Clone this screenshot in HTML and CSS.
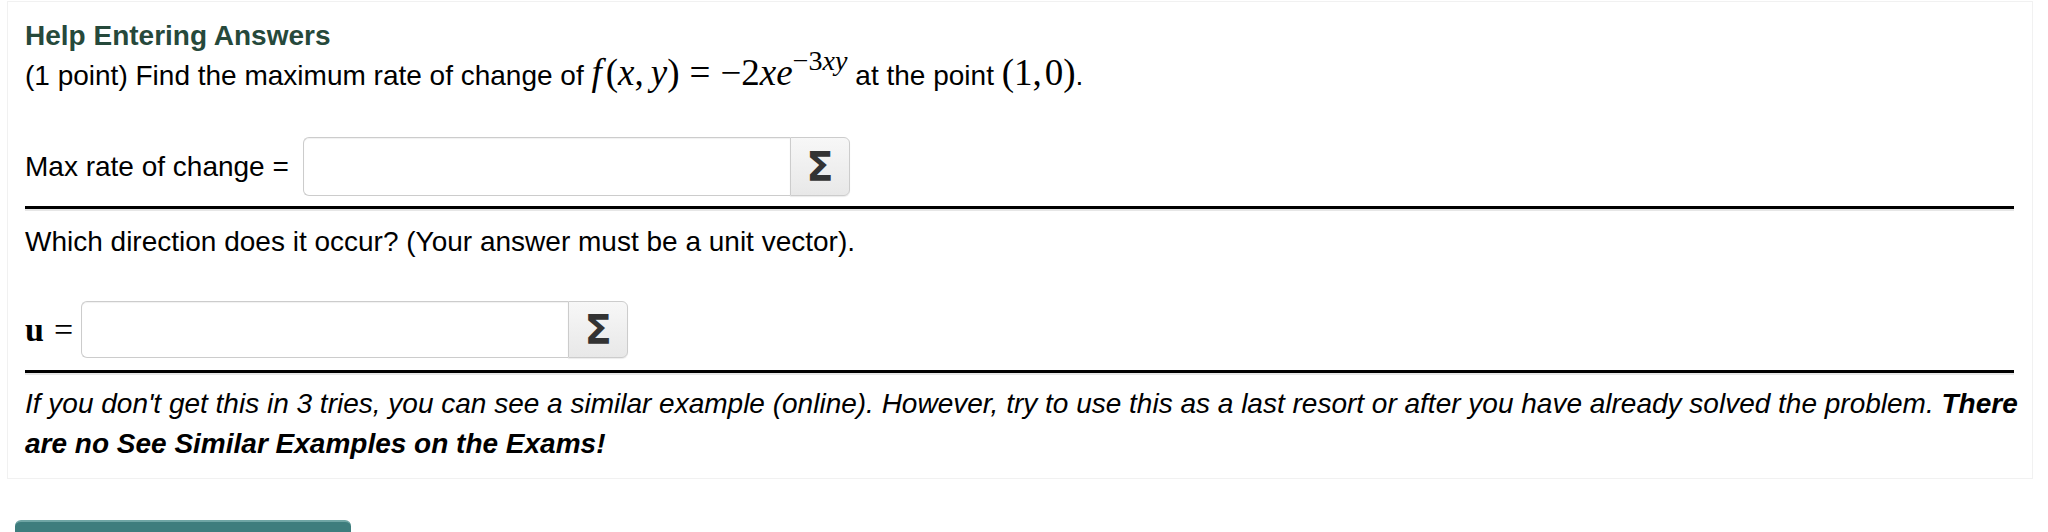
FILE: index.html
```html
<!DOCTYPE html>
<html>
<head>
<meta charset="utf-8">
<link rel="stylesheet" href="styles.css">
</head>
<body>
<div class="well">
  <div class="help">Help Entering Answers</div>
  <p class="problem">(1 point) Find the maximum rate of change of <span class="math"><i>f</i><span class="kern"></span>(<i>x</i>,<span class="thin"></span><i>y</i>)<span class="rel">=</span>−2<i>x</i><i>e</i><sup>−3<i>x</i><i>y</i></sup></span> at the point <span class="math">(1,<span class="tiny"></span>0)</span>.</p>

  <div class="answer-row">
    <span class="label label-wide">Max rate of change =</span>
    <span class="input-group">
      <span class="field"></span>
      <span class="sigma">Σ</span>
    </span>
  </div>
  <hr class="rule">

  <p class="line">Which direction does it occur? (Your answer must be a unit vector).</p>

  <div class="answer-row row-u">
    <span class="label label-u"><b class="vec">u</b><span class="eq">=</span></span>
    <span class="input-group">
      <span class="field"></span>
      <span class="sigma">Σ</span>
    </span>
  </div>
  <hr class="rule rule-u">

  <p class="note"><i>If you don't get this in 3 tries, you can see a similar example (online). However, try to use this as a last resort or after you have already solved the problem. <b>There are no See Similar Examples on the Exams!</b></i></p>
</div>
<div class="submit-bar"></div>
</body>
</html>
```

FILE: styles.css
```css
html, body {
  margin: 0;
  padding: 0;
  background: #fff;
}
body {
  font-family: "Liberation Sans", Helvetica, Arial, sans-serif;
  font-size: 28px;
  line-height: 40px;
  color: #000;
  padding-top: 1px;
}
.well {
  box-sizing: border-box;
  margin-left: 7px;
  width: 2026px;
  border: 1px solid #f1f1f1;
  padding: 14px 18px 14px 17px;
}
.help {
  font-weight: bold;
  color: #26493b;
  line-height: 40px;
}
.problem {
  margin: 0;
  line-height: 40px;
}
.math {
  font-family: "Liberation Serif", "Times New Roman", serif;
  font-size: 37px;
  line-height: 0;
}
.math i {
  font-style: italic;
}
.kern {
  display: inline-block;
  width: 4px;
}
.thin {
  display: inline-block;
  width: 7px;
}
.tiny {
  display: inline-block;
  width: 3px;
}
.rel {
  margin: 0 10px;
}
.math sup {
  font-size: 76%;
  line-height: 0;
  vertical-align: 15px;
}
.answer-row {
  display: flex;
  align-items: center;
  margin-top: 41px;
}
.label-wide {
  margin-right: 14px;
}
.label-u {
  font-family: "Liberation Serif", "Times New Roman", serif;
  font-size: 34px;
  margin-right: 8px;
}
.vec {
  font-weight: bold;
}
.eq {
  margin-left: 10px;
}
.input-group {
  display: flex;
  height: 59px;
}
.field {
  width: 486px;
  border: 1px solid #cccccc;
  border-right: none;
  border-radius: 6px 0 0 6px;
  background: #fff;
  box-shadow: inset 0 1px 1px rgba(0,0,0,0.06);
}
.sigma {
  width: 58px;
  border: 1px solid #cccccc;
  border-radius: 0 6px 6px 0;
  background: linear-gradient(#f7f7f7, #e8e8e8);
  display: flex;
  align-items: center;
  justify-content: center;
  font-family: "DejaVu Sans", "Liberation Sans", sans-serif;
  font-weight: bold;
  font-size: 40px;
  color: #333;
  box-shadow: 0 1px 1px rgba(0,0,0,0.08);
}
.row-u .input-group {
  height: 57px;
}
.rule {
  margin: 10px 0 0 0;
  height: 0;
  border: none;
  border-top: 3px solid #000;
  border-bottom: 2px solid #e6e6e6;
}
.line {
  margin: 11px 0 0 0;
}
.row-u {
  margin-top: 39px;
}
.rule-u {
  margin-top: 12px;
}
.note {
  margin: 9px -10px 0 0;
  line-height: 40px;
}
.submit-bar {
  margin: 41px 0 0 15px;
  width: 336px;
  height: 20px;
  background: #3e7d7d;
  border-top: 2px solid #6fa5a4;
  border-radius: 6px 6px 0 0;
}
```
